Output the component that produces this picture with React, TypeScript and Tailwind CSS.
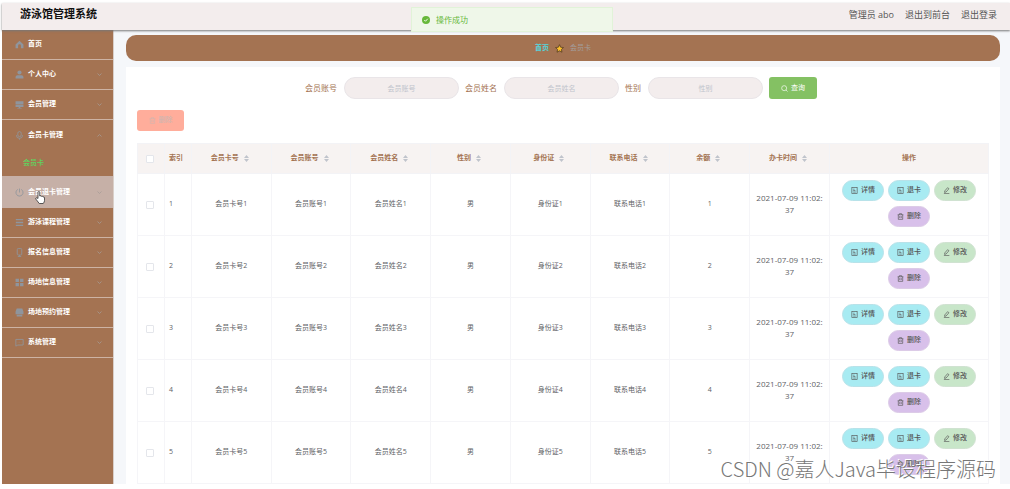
import type { ReactNode } from 'react'
import clsx from 'clsx'

type IconName =
  | 'home'
  | 'user'
  | 'board'
  | 'mic'
  | 'power'
  | 'list'
  | 'phone'
  | 'grid'
  | 'shop'
  | 'chat'
  | 'trash'
  | 'search'
  | 'doc'
  | 'edit'

const solid = { fill: 'currentColor', stroke: 'none' }

const icons: Record<IconName, ReactNode> = {
  home: <path {...solid} d="M8 1.5 1 8v6.5h4.5V10a2.5 2.5 0 0 1 5 0v4.5H15V8z" />,
  user: (
    <g {...solid}>
      <circle cx="8" cy="4.5" r="3.7" />
      <path d="M1 15v-2.5Q1 9.500 4.500 9.500h7q3.500 0 3.500 3V15z" />
    </g>
  ),
  board: <path {...solid} d="M1 2h14v5H1zM1 8h14v4.500H9.500V14H12v1H4v-1h2.500v-1.500H1z" />,
  mic: (
    <g>
      <rect x="5" y="1" width="6" height="9" rx="3" />
      <path d="M2.500 7.500a5.500 5.500 0 0 0 11 0M8 13v2.500" />
    </g>
  ),
  power: <path d="M5 2.500a6.300 6.300 0 1 0 6 0M8 1v7" />,
  list: <path strokeWidth="2.4" d="M1.500 3h13M1.500 8h13M1.500 13h13" />,
  phone: (
    <g>
      <rect x="4" y="1" width="8" height="11.500" rx="1.500" />
      <path d="M5 15h6M8 12.500V15" />
    </g>
  ),
  grid: <path {...solid} d="M1 1.500h6v5.500H1zM9 1.500h6v5.500H9zM1 9h6v5.500H1zM9 9h6v5.500H9z" />,
  shop: <path {...solid} d="M3 1h10l2 5v5H1V6zM3 12h10v3H3z" />,
  chat: (
    <g>
      <path d="M1.500 2.500h13v10H5l-3.500 2z" />
      <path d="M5 7.500h.8M7.700 7.500h.8M10.400 7.500h.8" />
    </g>
  ),
  trash: <path d="M1.500 4h13M5.500 4V1.500h5V4M3 4v10.500h10V4M6.300 7v4.500M9.700 7v4.500" />,
  search: (
    <g>
      <circle cx="7.200" cy="7.200" r="5.700" />
      <path d="m11.500 11.500 3.500 3.500" />
    </g>
  ),
  doc: (
    <g>
      <rect x="2" y="1.500" width="12" height="13" />
      <path d="M5 5h3M5 8h5M5 11.500h6" />
    </g>
  ),
  edit: <path d="m4 9 6.500-7.500 3 2.500L7 11.500l-3.500.8zM2 15h12.500" />,
}

function Icon({ name, className }: { name: IconName; className?: string }) {
  return (
    <svg
      viewBox="0 0 16 16"
      fill="none"
      stroke="currentColor"
      strokeWidth="1.5"
      aria-hidden="true"
      className={clsx('shrink-0', className)}
    >
      {icons[name]}
    </svg>
  )
}

function Chevron({ open }: { open?: boolean }) {
  return (
    <svg viewBox="0 0 10 6" fill="none" stroke="#a59c97" aria-hidden="true" className="ml-auto h-[3px] w-[5px]">
      <path strokeWidth="1.5" d={open ? 'M1 5 5 1l4 4' : 'm1 1 4 4 4-4'} />
    </svg>
  )
}

interface MenuEntry {
  label: string
  icon: IconName
  leaf?: boolean
  hovered?: boolean
  children?: string[]
}

const menu: MenuEntry[] = [
  { label: '首页', icon: 'home', leaf: true },
  { label: '个人中心', icon: 'user' },
  { label: '会员管理', icon: 'board' },
  { label: '会员卡管理', icon: 'mic', children: ['会员卡'] },
  { label: '会员退卡管理', icon: 'power', hovered: true },
  { label: '游泳课程管理', icon: 'list' },
  { label: '报名信息管理', icon: 'phone' },
  { label: '场地信息管理', icon: 'grid' },
  { label: '场地预约管理', icon: 'shop' },
  { label: '系统管理', icon: 'chat' },
]

function HandCursor() {
  return (
    <svg viewBox="0 0 20 26" aria-hidden="true" className="absolute top-[15px] left-[33px] h-[13px] w-[10px]">
      <path
        fill="#fff"
        stroke="#333"
        strokeWidth="1.6"
        strokeLinejoin="round"
        d="M6 15V3q0-2 1.800-2T9.500 3v7q3-1.500 3.500.8 3-1 3.300 1 2.700-.5 2.700 2V19q0 3-2.500 6H8.500L2 16.500q-1.500-2 .3-2.700Q4 13.200 6 15Z"
      />
    </svg>
  )
}

function Sidebar() {
  return (
    <nav className="w-[112px] shrink-0 border-r border-[#d9cfc9] bg-[#a47352]">
      <ul>
        {menu.map(item => (
          <li key={item.label} className="relative">
            <button
              type="button"
              className={clsx(
                'flex w-full items-center gap-[4px] pr-[11px] pl-[13px] text-[7px] font-bold text-white',
                item.hovered ? 'h-[32px] bg-[#c6b0a7]' : 'h-[30px]',
                !item.hovered && !item.children && 'border-b border-[#cdb3a4]',
              )}
            >
              <Icon name={item.icon} className="size-[9px] text-[#8f959d]" />
              {item.label}
              {!item.leaf && <Chevron open={!!item.children} />}
            </button>
            {item.hovered && <HandCursor />}
            {item.children?.map(child => (
              <a key={child} href="#card" className="flex h-[26px] items-center pl-[21px] text-[7px] font-medium text-[#5fd35f]">
                {child}
              </a>
            ))}
          </li>
        ))}
      </ul>
    </nav>
  )
}

function Header() {
  return (
    <header className="relative z-10 flex h-[27px] items-center justify-between bg-[#f3eded] pr-[13px] pl-[18px] shadow-[0_1px_2px_#777]">
      <h1 className="pb-1 text-[11px] font-bold text-[#111]">游泳馆管理系统</h1>
      <div className="flex gap-[11px] pb-1 text-[9px] text-[#555]">
        <span>管理员 abo</span>
        <a href="#front">退出到前台</a>
        <a href="#logout">退出登录</a>
      </div>
      <div
        role="status"
        className="absolute top-1 left-1/2 flex h-[25px] w-[202px] -translate-x-[95px] items-center gap-[6px] border border-[#e1f3d8] bg-[#eff7e9] pl-[10px] text-[8px] text-[#67b83a]"
      >
        <svg viewBox="0 0 16 16" aria-hidden="true" className="size-[8px]">
          <circle cx="8" cy="8" r="8" fill="#67b83a" />
          <path d="m4.500 8 2.500 2.500 4.500-5" fill="none" stroke="#fff" strokeWidth="1.800" />
        </svg>
        操作成功
      </div>
    </header>
  )
}

function Breadcrumb() {
  return (
    <nav className="flex h-[26px] items-center justify-center gap-[6px] rounded-[10px] bg-[#a47352] text-[7px]">
      <a href="#home" className="font-bold text-[#55d5dc]">
        首页
      </a>
      <svg viewBox="0 0 20 20" aria-hidden="true" className="size-[9px]">
        <path
          d="m10 1.500 2.600 5.700 6.200.7-4.600 4.200 1.300 6.100L10 15.100l-5.500 3.100 1.300-6.100L1.200 7.900l6.200-.7z"
          fill="#fdc02c"
          stroke="#4b351f"
          strokeWidth="1.6"
        />
      </svg>
      <span className="text-[#a39e9d]">会员卡</span>
    </nav>
  )
}

const filters = [
  { id: 'account', label: '会员账号' },
  { id: 'name', label: '会员姓名' },
  { id: 'gender', label: '性别' },
]

function SearchForm() {
  return (
    <form className="flex items-center justify-center gap-[6px] pr-[4px]">
      {filters.map(({ id, label }) => (
        <div key={id} className="flex items-center gap-[7px]">
          <label htmlFor={id} className="text-[8px] text-[#a47352]">
            {label}
          </label>
          <input
            id={id}
            type="text"
            placeholder={label}
            className="h-[22px] w-[115px] rounded-full border border-[#e9e5e8] bg-[#f3eded] px-2 text-center text-[7px] text-[#606266] placeholder:text-[#c0c4cc]"
          />
        </div>
      ))}
      <button type="button" className="flex h-[22px] w-[48px] items-center justify-center gap-[3px] rounded-[3px] bg-[#84c163] text-[7px] text-white">
        <Icon name="search" className="size-[7px]" />
        查询
      </button>
    </form>
  )
}

const columns = ['会员卡号', '会员账号', '会员姓名', '性别', '身份证', '联系电话', '余额', '办卡时间']

const rows = [1, 2, 3, 4, 5].map(n => ({
  id: n,
  cells: [`会员卡号${n}`, `会员账号${n}`, `会员姓名${n}`, '男', `身份证${n}`, `联系电话${n}`, `${n}`],
  time: ['2021-07-09 11:02:', '37'],
}))

const actions: { label: string; icon: IconName; tone: string }[] = [
  { label: '详情', icon: 'doc', tone: 'bg-[#a8ebf2] border-[#b8e2e9]' },
  { label: '退卡', icon: 'doc', tone: 'bg-[#a8ebf2] border-[#b8e2e9]' },
  { label: '修改', icon: 'edit', tone: 'bg-[#c8e6c9] border-[#d0e2d1]' },
  { label: '删除', icon: 'trash', tone: 'bg-[#d8c0ea] border-[#dccbe7]' },
]

function SortCaret() {
  return (
    <svg viewBox="0 0 10 14" fill="#c0c4cc" aria-hidden="true" className="h-[7px] w-[5px]">
      <path d="m5 0 5 6H0zM5 14 0 8h10z" />
    </svg>
  )
}

function Check({ label }: { label: string }) {
  return (
    <input
      type="checkbox"
      aria-label={label}
      className="mr-auto ml-[8px] block size-[8px] appearance-none rounded-[1px] border border-[#e4e6eb] bg-white"
    />
  )
}

function CardTable() {
  return (
    <table className="w-full table-fixed border-collapse text-[7px] text-[#606266]">
      <thead>
        <tr className="h-[30px] bg-[#f7f3f2] text-[#a47352]">
          <th className="w-[27px] border border-[#f3f3f6]">
            <Check label="全选" />
          </th>
          <th className="w-[27px] border border-[#f3f3f6] pl-[4px] text-left">索引</th>
          {columns.map(column => (
            <th key={column} className="w-[9.37%] border border-[#f3f3f6]">
              <button type="button" className="flex w-full items-center justify-center gap-[5px] pr-[3px]">
                {column}
                <SortCaret />
              </button>
            </th>
          ))}
          <th className="border border-[#f3f3f6]">操作</th>
        </tr>
      </thead>
      <tbody>
        {rows.map(row => (
          <tr key={row.id} className="h-[62px] text-center">
            <td className="border border-[#f5f5f8]">
              <Check label={`选择第${row.id}行`} />
            </td>
            <td className="border border-[#f5f5f8] pl-[4px] text-left">{row.id}</td>
            {row.cells.map((cell, i) => (
              <td key={i} className="border border-[#f5f5f8]">
                {cell}
              </td>
            ))}
            <td className="border border-[#f5f5f8] pb-[2px] text-[8px] leading-[12px]">
              {row.time[0]}
              <br />
              {row.time[1]}
            </td>
            <td className="border border-[#f5f5f8] px-2 pb-[2px]">
              <div className="flex flex-wrap justify-center gap-x-[4px] gap-y-[5px]">
                {actions.map(({ label, icon, tone }) => (
                  <button
                    key={label}
                    type="button"
                    className={clsx(
                      'flex h-[21px] w-[42px] items-center justify-center gap-[3px] rounded-full border text-[7px] font-medium text-[#555]',
                      tone,
                    )}
                  >
                    <Icon name={icon} className="size-[7px]" />
                    {label}
                  </button>
                ))}
              </div>
            </td>
          </tr>
        ))}
      </tbody>
    </table>
  )
}

export default function App() {
  return (
    <div className="relative bg-white pt-[3px] pl-[2px] font-['Open_Sans','Noto_Sans_CJK_SC',sans-serif]">
      <Header />
      <div className="flex">
        <Sidebar />
        <main className="min-w-0 flex-1 bg-[#f5f7fa] pt-[5px] pr-[10px] pl-[12px]">
          <Breadcrumb />
          <section className="mt-[6px] bg-white px-[11px] pt-[10px]">
            <SearchForm />
            <button
              type="button"
              disabled
              className="mt-[11px] mb-[12px] flex h-[21px] w-[47px] items-center justify-center gap-[3px] rounded-[3px] bg-[#ffad9b] text-[7px] font-medium text-[#d0b5b0]"
            >
              <Icon name="trash" className="size-[7px]" />
              删除
            </button>
            <CardTable />
          </section>
        </main>
      </div>
      <p className="pointer-events-none absolute right-[14px] bottom-0 font-['Noto_Sans_CJK_SC',sans-serif] text-[20px] leading-[30px] font-light text-[#777] [text-shadow:0_0_1px_#fff,-1px_-1px_0_#fff]">
        CSDN @嘉人Java毕设程序源码
      </p>
    </div>
  )
}
